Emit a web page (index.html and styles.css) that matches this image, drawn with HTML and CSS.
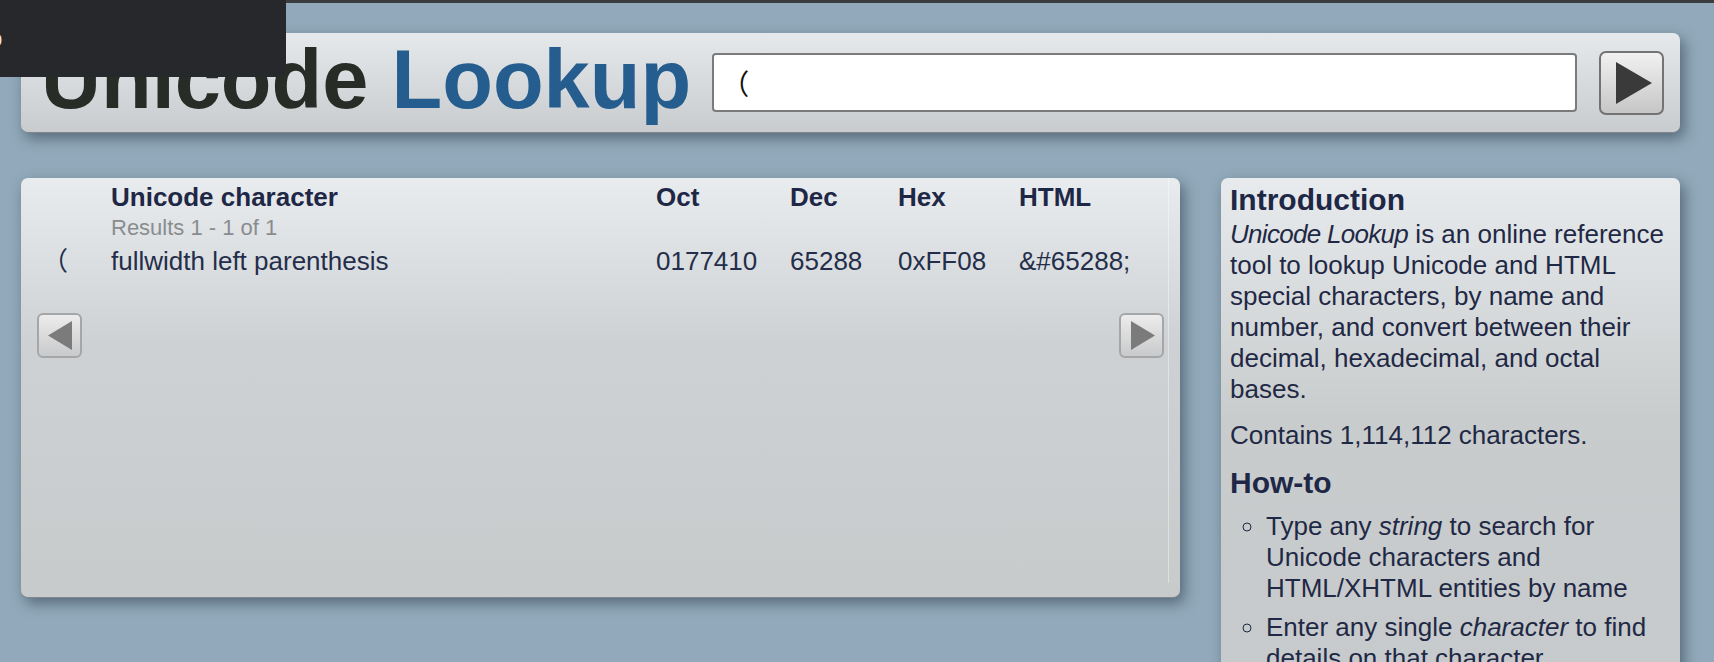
FILE: index.html
```html
<!DOCTYPE html>
<html lang="en">
<head>
    <meta charset="UTF-8">
    <meta name="viewport" content="width=device-width, initial-scale=1.0">
    <title>Unicode Lookup</title>
    <link rel="stylesheet" href="styles.css">
</head>
<body>
    <div class="topline"></div>
    <div class="popup"><span>p</span></div>

    <div class="page">
        <header class="masthead">
            <h1><span class="uni">Unicode</span> <span class="look">Lookup</span></h1>
            <input type="text" class="search" value="（">
            <button class="go" type="button">
                <svg width="36" height="42" viewBox="0 0 36 42"><polygon points="0,0 36,21 0,42" fill="#3a3a3a"/></svg>
            </button>
        </header>

        <div class="main">
            <!-- Results table -->
            <section class="results">
                <div class="results-inner">
                    <div class="grid">
                        <div class="head"></div>
                        <div class="head">
                            Unicode character
                            <div class="count">Results 1 - 1 of 1</div>
                        </div>
                        <div class="head">Oct</div>
                        <div class="head">Dec</div>
                        <div class="head">Hex</div>
                        <div class="head">HTML</div>

                        <div class="cell char">（</div>
                        <div class="cell">fullwidth left parenthesis</div>
                        <div class="cell">0177410</div>
                        <div class="cell">65288</div>
                        <div class="cell">0xFF08</div>
                        <div class="cell">&amp;#65288;</div>
                    </div>

                    <div class="pager">
                        <button class="nav prev" type="button">
                            <svg width="24" height="29" viewBox="0 0 24 29"><polygon points="24,0 0,14.5 24,29" fill="#7b7b7b"/></svg>
                        </button>
                        <button class="nav next" type="button">
                            <svg width="24" height="29" viewBox="0 0 24 29"><polygon points="0,0 24,14.5 0,29" fill="#7b7b7b"/></svg>
                        </button>
                    </div>
                </div>
            </section>

            <!-- Side info -->
            <aside class="info">
                <h2>Introduction</h2>
                <p><em>Unicode Lookup</em> is an online reference tool to lookup Unicode and HTML special characters, by name and number, and convert between their decimal, hexadecimal, and octal bases.</p>
                <p class="total">Contains 1,114,112 characters.</p>
                <h2 class="howto">How-to</h2>
                <ul>
                    <li>Type any <em>string</em> to search for Unicode characters and HTML/XHTML entities by name</li>
                    <li>Enter any single <em>character</em> to find details on that character</li>
                </ul>
            </aside>
        </div>
    </div>
</body>
</html>
```

FILE: styles.css
```css
body {
    margin: 0;
    background-color: #91a9ba;
    font-family: "Liberation Sans", Arial, "Noto Sans CJK JP", sans-serif;
    color: #1f2945;
    overflow: hidden;
}
.topline {
    height: 3px;
    background-color: #3b3c3f;
}
.popup {
    position: absolute;
    top: 0;
    left: 0;
    z-index: 5;
    width: 286px;
    height: 77px;
    background-color: #27282c;
    border-bottom-right-radius: 10px;
    overflow: hidden;
}
.popup span {
    position: absolute;
    left: -10px;
    top: 26px;
    color: #e6e6e6;
    font-size: 22px;
}
.page {
    padding: 30px 34px 0 21px;
}
.masthead {
    display: flex;
    align-items: center;
    height: 99px;
    padding: 0 16px 0 20px;
    background: linear-gradient(#e6e9eb, #c8ccce);
    border-radius: 7px;
    box-shadow: 0 1px 0 #80868b, 4px 6px 14px rgba(25, 40, 55, 0.5);
}
.masthead h1 {
    align-self: flex-start;
    margin: 5px 21px 0 0;
    font-size: 83px;
    line-height: 84px;
    font-weight: bold;
    white-space: nowrap;
}
.uni {
    color: #272c27;
}
.look {
    color: #255d8e;
}
.search {
    flex: 1;
    box-sizing: border-box;
    height: 59px;
    padding: 0 0 0 7px;
    border: 2px solid #7b7b7b;
    border-radius: 4px;
    background-color: #fff;
    font-family: "Liberation Sans", "Noto Sans CJK JP", sans-serif;
    font-size: 28px;
    color: #111;
}
.go {
    box-sizing: border-box;
    width: 65px;
    height: 64px;
    margin-left: 22px;
    padding: 0 0 0 5px;
    border: 2px solid #737373;
    border-radius: 7px;
    background: linear-gradient(#f1f1f1, #c6c6c6);
    display: flex;
    align-items: center;
    justify-content: center;
}
.main {
    display: flex;
    align-items: flex-start;
    gap: 41px;
    margin-top: 46px;
}
.results {
    box-sizing: border-box;
    width: 1159px;
    height: 419px;
    padding: 0 11px 14px 0;
    border-radius: 7px;
    background: linear-gradient(#e9ecee 0, #ced1d3 40%, #c8cbcc 100%);
    box-shadow: 0 1px 0 #80868b, 4px 6px 14px rgba(25, 40, 55, 0.5);
}
.results-inner {
    height: 100%;
    border-right: 1px solid rgba(255, 255, 255, 0.4);
}
.grid {
    display: grid;
    grid-template-columns: 90px 545px 134px 108px 121px auto;
    row-gap: 6px;
}
.head {
    padding-top: 4px;
    font-size: 26px;
    line-height: 30px;
    font-weight: bold;
    color: #1e2846;
}
.count {
    margin-top: 4px;
    font-size: 22px;
    line-height: 24px;
    font-weight: normal;
    color: #898c8f;
}
.cell {
    font-size: 26px;
    line-height: 30px;
    color: #242e4a;
}
.cell.char {
    padding-left: 21px;
}
.pager {
    display: flex;
    justify-content: space-between;
    margin-top: 37px;
    padding: 0 4px 0 16px;
}
.nav {
    box-sizing: border-box;
    width: 45px;
    height: 45px;
    padding: 0;
    border: 2px solid #a4a6a8;
    border-radius: 6px;
    background: linear-gradient(#ececed, #c9cacb);
    display: flex;
    align-items: center;
    justify-content: center;
}
.nav.next {
    padding-left: 3px;
}
.info {
    flex: 1;
    min-height: 520px;
    padding: 5px 14px 0 9px;
    border-radius: 7px;
    background: linear-gradient(#e8ebed 0, #c9cccd 240px, #c7cacc 100%);
    box-shadow: 0 1px 0 #80868b, 4px 6px 14px rgba(25, 40, 55, 0.5);
    font-size: 26px;
    line-height: 31px;
}
.info h2 {
    margin: 0 0 2px 0;
    font-size: 30px;
    line-height: 34px;
    color: #1e2846;
}
.info p {
    margin: 0;
}
.info p em {
    letter-spacing: -0.7px;
}
.info .total {
    margin-top: 15px;
}
.info .howto {
    margin-top: 15px;
    margin-bottom: 11px;
}
.info ul {
    margin: 0;
    padding-left: 36px;
    list-style: circle;
}
.info li {
    margin-bottom: 8px;
}
```
